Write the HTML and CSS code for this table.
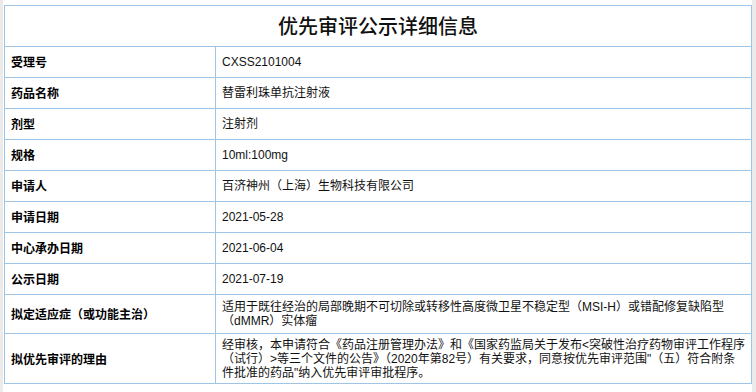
FILE: index.html
```html
<!DOCTYPE html>
<html lang="zh-CN">
<head>
<meta charset="utf-8">
<title>优先审评公示详细信息</title>
<link rel="stylesheet" href="styles.css">
</head>
<body>
<div class="page">
  <table class="detail">
    <colgroup>
      <col class="col-label">
      <col class="col-value">
    </colgroup>
    <tr class="title-row">
      <th colspan="2" class="title">优先审评公示详细信息</th>
    </tr>
    <tr class="row">
      <td class="label">受理号</td>
      <td class="value">CXSS2101004</td>
    </tr>
    <tr class="row">
      <td class="label">药品名称</td>
      <td class="value">替雷利珠单抗注射液</td>
    </tr>
    <tr class="row">
      <td class="label">剂型</td>
      <td class="value">注射剂</td>
    </tr>
    <tr class="row">
      <td class="label">规格</td>
      <td class="value">10ml:100mg</td>
    </tr>
    <tr class="row">
      <td class="label">申请人</td>
      <td class="value">百济神州（上海）生物科技有限公司</td>
    </tr>
    <tr class="row">
      <td class="label">申请日期</td>
      <td class="value">2021-05-28</td>
    </tr>
    <tr class="row">
      <td class="label">中心承办日期</td>
      <td class="value">2021-06-04</td>
    </tr>
    <tr class="row">
      <td class="label">公示日期</td>
      <td class="value">2021-07-19</td>
    </tr>
    <tr class="row row-two">
      <td class="label">拟定适应症（或功能主治）</td>
      <td class="value multi">适用于既往经治的局部晚期不可切除或转移性高度微卫星不稳定型（MSI-H）或错配修复缺陷型（dMMR）实体瘤</td>
    </tr>
    <tr class="row row-three">
      <td class="label">拟优先审评的理由</td>
      <td class="value multi">经审核，本申请符合《药品注册管理办法》和《国家药监局关于发布&lt;突破性治疗药物审评工作程序（试行）&gt;等三个文件的公告》（2020年第82号）有关要求，同意按优先审评范围"（五）符合附条件批准的药品"纳入优先审评审批程序。</td>
    </tr>
  </table>
</div>
</body>
</html>
```

FILE: styles.css
```css
html, body {
  margin: 0;
  padding: 0;
  background: #ffffff;
}

.page {
  box-sizing: border-box;
  width: 756px;
  min-height: 392px;
  border-left: 3px solid #ebebeb;
  border-right: 4px solid #ebebeb;
  padding: 5px 0 0 1px;
  font-family: "Liberation Sans", "Noto Sans CJK SC", sans-serif;
  font-size: 12px;
  color: #111;
}

.detail {
  width: 748px;
  border-collapse: collapse;
  table-layout: fixed;
}

.col-label {
  width: 211px;
}

.detail th,
.detail td {
  border: 1px solid #9ec4e6;
  padding: 0 6px;
  vertical-align: middle;
  line-height: 14px;
}

.title-row {
  height: 41px;
}

.title {
  font-family: "Noto Sans CJK SC", sans-serif;
  font-size: 20px;
  font-weight: 500;
  text-align: center;
  color: #111;
  padding-top: 1px;
}

.row {
  height: 31px;
}

.label {
  font-family: "Noto Sans CJK SC", sans-serif;
  font-weight: 700;
  font-size: 12px;
  color: #000;
}

.value {
  color: #111;
}

.multi {
  padding-top: 3px;
  padding-bottom: 3px;
}

.row-two {
  height: 39px;
}

.row-three {
  height: 50px;
}
```
